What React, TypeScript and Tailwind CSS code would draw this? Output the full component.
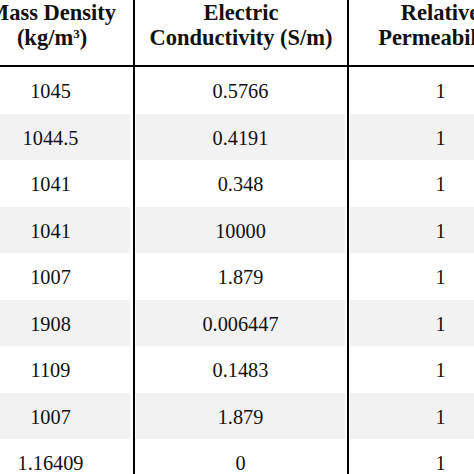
const rows = [
  ["1045", "0.5766", "1"],
  ["1044.5", "0.4191", "1"],
  ["1041", "0.348", "1"],
  ["1041", "10000", "1"],
  ["1007", "1.879", "1"],
  ["1908", "0.006447", "1"],
  ["1109", "0.1483", "1"],
  ["1007", "1.879", "1"],
  ["1.16409", "0", "1"],
]

export default function App() {
  return (
    <div className="w-[474px] h-[474px] overflow-hidden bg-white text-[#111] font-serif">
      <div className="ml-[-29px] w-[560px] font-[Liberation_Serif,serif]">
        {/* Header */}
        <div className="flex h-[67px] border-b-2 border-black text-[22.5px] font-bold leading-[24.5px] text-center">
          <div className="w-[162px] pt-[1px]">
            <div>Mass Density</div>
            <div>
              (kg/m<sup className="text-[13px] leading-none">3</sup>)
            </div>
          </div>
          <div className="w-[214px] border-l-2 border-black pt-[1px]">
            <div>Electric</div>
            <div>Conductivity (S/m)</div>
          </div>
          <div className="w-[184px] border-l-2 border-black pt-[1px]">
            <div>Relative</div>
            <div>Permeability</div>
          </div>
        </div>

        {/* Body */}
        {rows.map((r, i) => {
          const shade = i % 2 === 1 ? "bg-[#f2f2f2]" : "bg-white"
          return (
            <div key={i} className="flex h-[46.5px] text-[20.3px] text-center">
              <div className="w-[162px] pr-[3px]">
                <div className={`h-full pt-[2px] leading-[44.5px] ${shade}`}>{r[0]}</div>
              </div>
              <div className="w-[214px] border-l-2 border-black pl-[1px] pr-[2px]">
                <div className={`h-full pt-[2px] leading-[44.5px] ${shade}`}>{r[1]}</div>
              </div>
              <div className="w-[184px] border-l-2 border-black pl-[1px]">
                <div className={`h-full pt-[2px] leading-[44.5px] ${shade}`}>{r[2]}</div>
              </div>
            </div>
          )
        })}
      </div>
    </div>
  )
}
